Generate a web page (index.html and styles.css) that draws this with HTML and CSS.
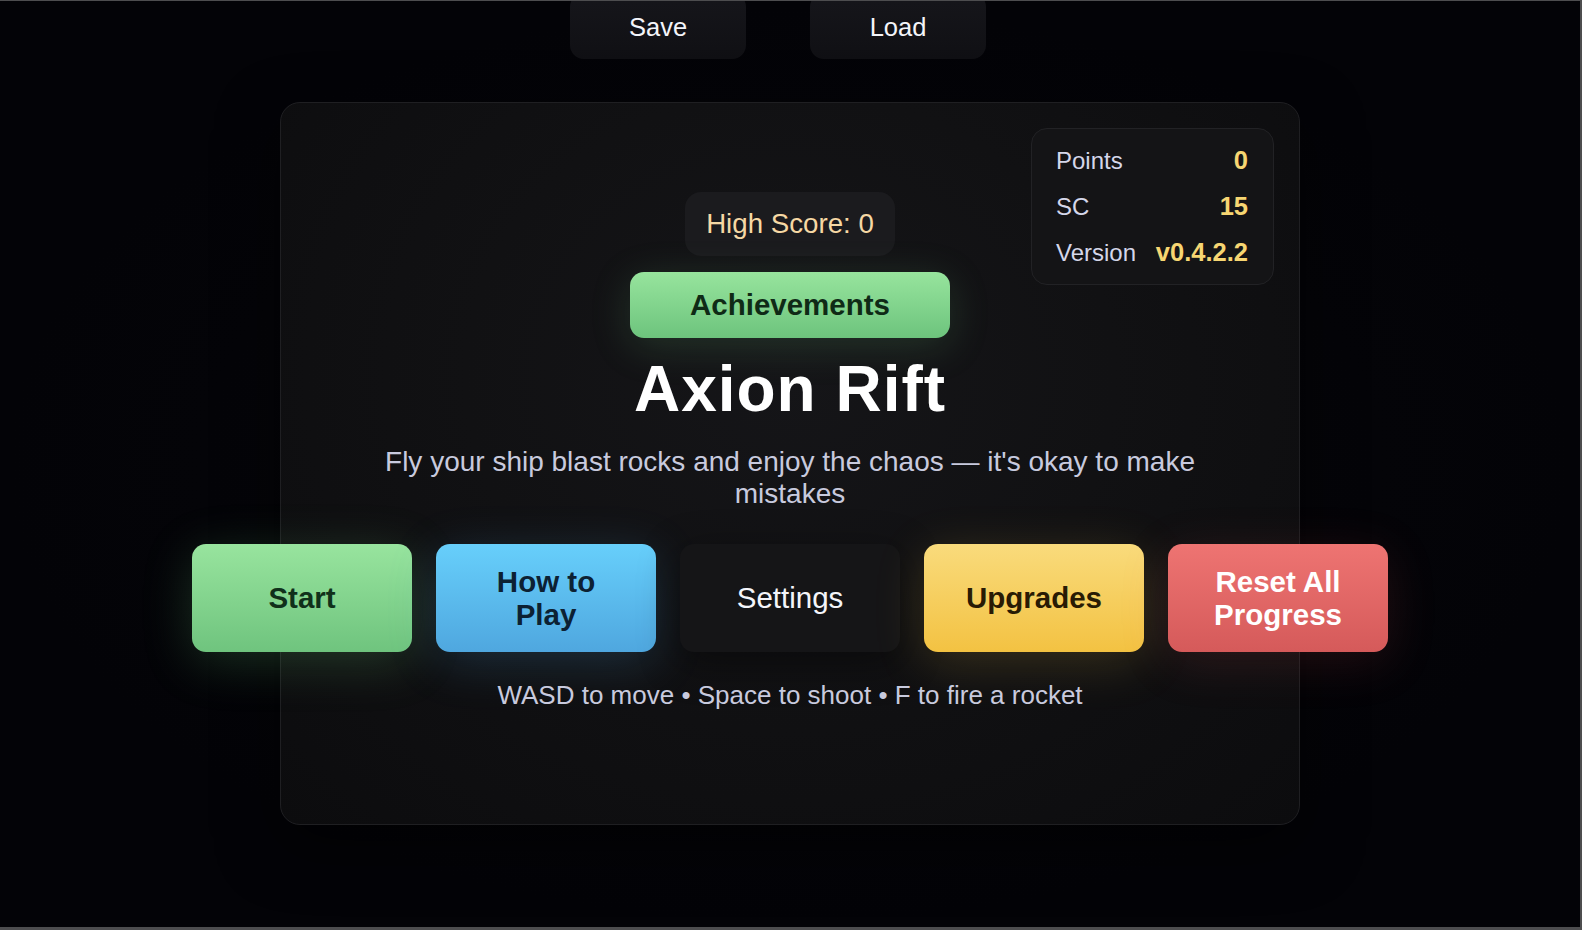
FILE: index.html
```html
<!DOCTYPE html>
<html lang="en">
<head>
<meta charset="utf-8">
<title>Axion Rift</title>
<link rel="stylesheet" href="styles.css">
</head>
<body>
<div class="frame">
  <nav class="topbar">
    <button class="top-btn">Save</button>
    <button class="top-btn">Load</button>
  </nav>
  <main class="card">
    <div class="stats">
      <div class="stat-row"><span class="stat-label">Points</span><span class="stat-value">0</span></div>
      <div class="stat-row"><span class="stat-label">SC</span><span class="stat-value">15</span></div>
      <div class="stat-row"><span class="stat-label">Version</span><span class="stat-value">v0.4.2.2</span></div>
    </div>
    <div class="highscore">High Score: 0</div>
    <button class="achievements">Achievements</button>
    <h1 class="title">Axion Rift</h1>
    <p class="subtitle">Fly your ship blast rocks and enjoy the chaos — it's okay to make mistakes</p>
    <div class="menu">
      <button class="menu-btn btn-start">Start</button>
      <button class="menu-btn btn-help">How to Play</button>
      <button class="menu-btn btn-settings">Settings</button>
      <button class="menu-btn btn-upgrades">Upgrades</button>
      <button class="menu-btn btn-reset">Reset All Progress</button>
    </div>
    <p class="hint">WASD to move • Space to shoot • F to fire a rocket</p>
  </main>
</div>
</body>
</html>
```

FILE: styles.css
```css
* { box-sizing: border-box; }

html {
  background: #4d4d4f;
}

body {
  margin: 0;
  font-family: "Liberation Sans", Arial, Helvetica, sans-serif;
}

button {
  font-family: inherit;
  border: none;
  cursor: pointer;
}

.frame {
  margin: 1px 2px 0 0;
  height: 926px;
  overflow: hidden;
  background: radial-gradient(ellipse at 50% 50%, #07070b 0%, #030307 70%);
}

.topbar {
  display: flex;
  justify-content: center;
  gap: 64px;
  padding-right: 24px;
  margin-top: -8px;
}

.top-btn {
  width: 176px;
  height: 66px;
  border-radius: 14px;
  background: linear-gradient(180deg, #16161b 0%, #101014 100%);
  color: #f4f5fa;
  font-size: 25.5px;
  padding-top: 4px;
}

.card {
  position: relative;
  width: 1020px;
  height: 723px;
  margin: 43px auto 0;
  border: 1px solid #1f1f22;
  border-radius: 20px;
  background: radial-gradient(ellipse at 50% 38%, #151518 0%, #111113 45%, #0c0c0e 100%);
  box-shadow: 0 20px 60px rgba(0, 0, 0, 0.6);
  padding-top: 89px;
  display: flex;
  flex-direction: column;
  align-items: center;
}

.stats {
  position: absolute;
  top: 25px;
  right: 25px;
  width: 243px;
  height: 157px;
  padding: 8px 25px 11px 24px;
  border: 1px solid #222225;
  border-radius: 16px;
  background: #141416;
}

.stat-row {
  display: flex;
  justify-content: space-between;
  align-items: baseline;
  height: 46px;
  line-height: 46px;
}

.stat-label {
  color: #d5d7ea;
  font-size: 24px;
}

.stat-value {
  color: #f7d672;
  font-size: 25.5px;
  font-weight: 700;
}

.highscore {
  height: 64px;
  line-height: 64px;
  padding: 0 21px;
  border-radius: 16px;
  background: #1b1b1e;
  color: #f6d8a4;
  font-size: 27.7px;
}

.achievements {
  margin-top: 16px;
  width: 320px;
  height: 66px;
  border-radius: 14px;
  background: linear-gradient(180deg, #97e49d 0%, #6dc47d 100%);
  color: #0f2a16;
  font-size: 29.5px;
  font-weight: 700;
  box-shadow: 0 8px 40px rgba(110, 200, 125, 0.18);
}

.title {
  margin: 16px 0 0;
  color: #ffffff;
  font-size: 64px;
  line-height: 70px;
  font-weight: 700;
  letter-spacing: 1px;
}

.subtitle {
  margin: 22px 0 0;
  max-width: 860px;
  text-align: center;
  color: #c8cade;
  font-size: 28px;
  line-height: 32px;
}

.menu {
  flex-shrink: 0;
  width: 1196px;
  margin-top: 34px;
  display: flex;
  gap: 24px;
}

.menu-btn {
  width: 220px;
  height: 108px;
  padding: 0 28px 1px;
  border-radius: 14px;
  font-size: 29.5px;
  line-height: 33px;
  font-weight: 700;
}

.btn-start {
  background: linear-gradient(180deg, #98e49e 0%, #6fc47e 100%);
  color: #10301a;
  box-shadow: 0 10px 50px rgba(110, 205, 125, 0.22);
}

.btn-help {
  background: linear-gradient(180deg, #67cffb 0%, #4fa7df 100%);
  color: #0c2133;
  box-shadow: 0 10px 50px rgba(80, 170, 230, 0.2);
}

.btn-settings {
  background: #151517;
  color: #f4f5fa;
  font-weight: 400;
  box-shadow: 0 10px 40px rgba(0, 0, 0, 0.4);
}

.btn-upgrades {
  background: linear-gradient(180deg, #f9db7c 0%, #f3c242 100%);
  color: #291b04;
  box-shadow: 0 10px 50px rgba(240, 195, 70, 0.18);
}

.btn-reset {
  background: linear-gradient(180deg, #ee7472 0%, #d55a5a 100%);
  color: #ffffff;
  box-shadow: 0 10px 50px rgba(220, 90, 90, 0.15);
}

.hint {
  margin: 28px 0 0;
  color: #c8cade;
  font-size: 26px;
  line-height: 30px;
}
```
